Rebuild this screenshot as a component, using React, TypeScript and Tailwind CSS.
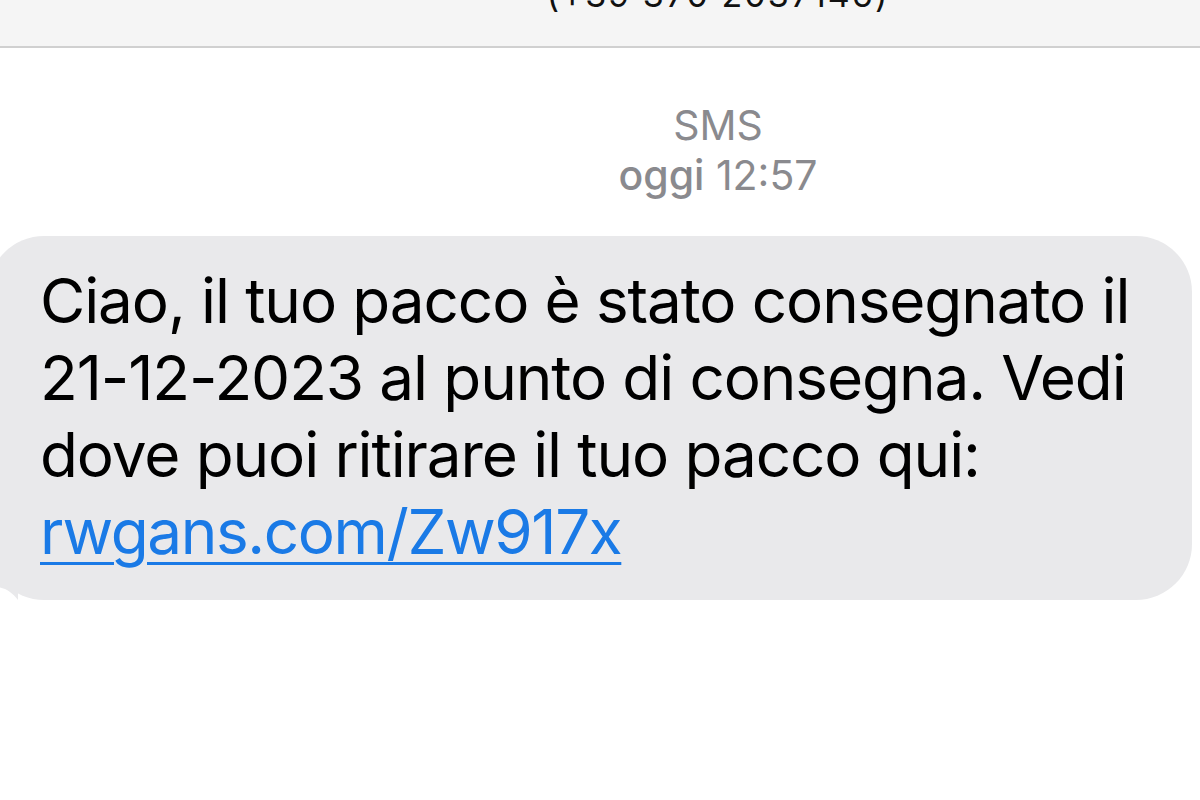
export default function App() {
  return (
    <div className="w-[1200px] h-[800px] bg-white overflow-hidden" style={{ fontFamily: 'Inter, "Noto Sans", sans-serif' }}>
      <div className="h-[48px] bg-[#f5f5f5] border-b-2 border-[#d0d0d0] overflow-hidden flex justify-center pl-[236px]">
        <div className="mt-[-25px] text-[34px] leading-[40px] text-[#111] tracking-[2px]">(+39 370 2037146)</div>
      </div>
      <div className="flex flex-col items-center mt-[52px] pl-[236px] text-[#8a8a8e] text-[41px] leading-[50px]">
        <div>SMS</div>
        <div><span className="font-medium">oggi</span> 12:57</div>
      </div>
      <div className="relative mt-[36px] ml-[-12px] w-[1204px]">
        <div className="bg-[#e9e9eb] rounded-[56px] pl-[52px] pr-[40px] pt-[26px] pb-[30px] text-[62px] leading-[77px] text-black tracking-[-1.1px]">
          <div>Ciao, il tuo pacco è stato consegnato il</div>
          <div>21-12-2023 al punto di consegna. Vedi</div>
          <div>dove puoi ritirare il tuo pacco qui:</div>
          <div className="text-[#1a7ae6] underline decoration-[3px] underline-offset-[8px] tracking-[-1.4px]">rwgans.com/Zw917x</div>
        </div>
        <svg className="absolute left-0 bottom-0" width="60" height="40" viewBox="0 0 60 40">
          <path d="M0 0 L30 0 L30 40 C22 30 14 25 0 28 Z" fill="#e9e9eb" />
        </svg>
      </div>
    </div>
  );
}
